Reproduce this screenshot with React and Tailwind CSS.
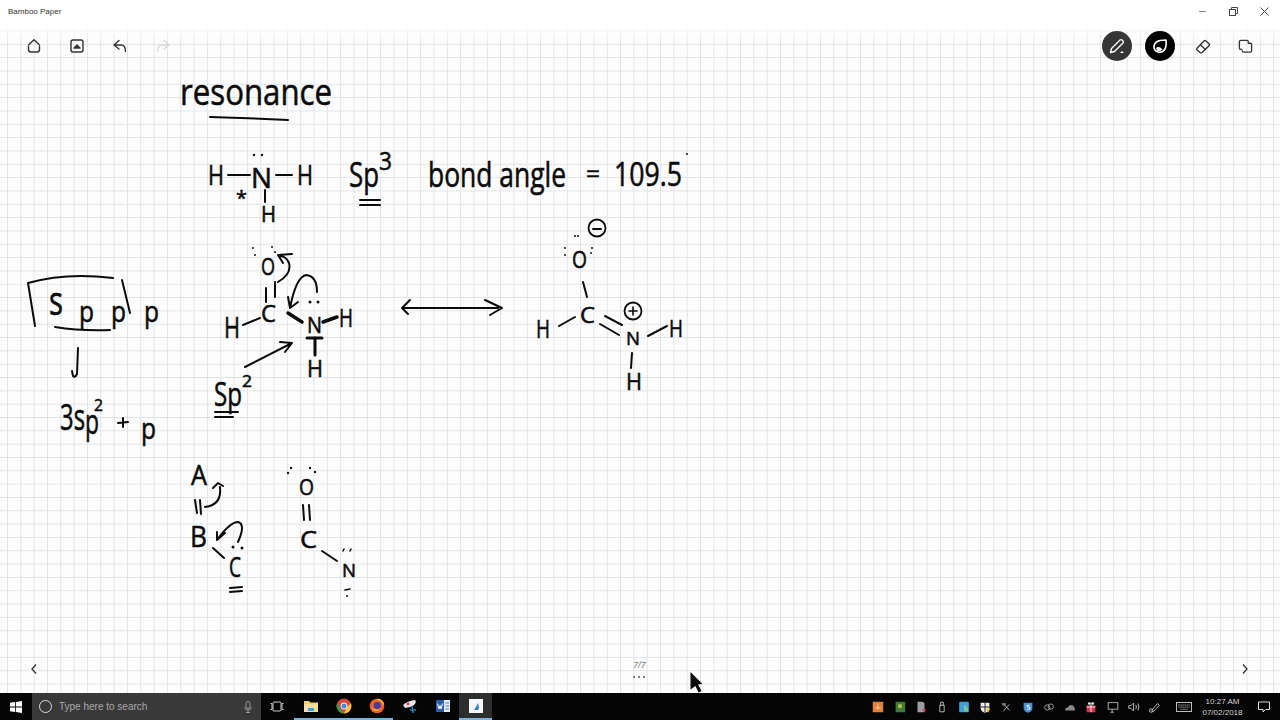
import React from 'react';

// one written glyph group on the page, x = left edge, y = baseline
const T = ({ x, y, s = 28, w, children }) => (
  <text x={x} y={y} fontSize={s} textLength={w} lengthAdjust={w ? 'spacingAndGlyphs' : undefined} stroke="#0b0b0b" strokeWidth={0.55}>
    {children}
  </text>
);

const L = ({ d, t = 2 }) => <path d={d} fill="none" stroke="#0b0b0b" strokeWidth={t} strokeLinecap="round" strokeLinejoin="round" />;

const Dots = ({ pts, r = 1.2 }) => (
  <>
    {pts.map(([cx, cy]) => (
      <circle key={`${cx}-${cy}`} cx={cx} cy={cy} r={r} fill="#111" />
    ))}
  </>
);

const Ink = () => (
  <svg
    className="absolute inset-0 h-full w-full font-['Open_Sans',sans-serif]"
    viewBox="0 23 1280 670"
    fill="#0b0b0b"
  >
    {/* title */}
    <T x={180} y={105} s={37} w={152}>resonance</T>
    <L d="M210 117 Q250 118 288 120" />

    {/* NH3 */}
    <T x={208} y={185} w={16}>H</T>
    <L d="M228 175 L250 175" />
    <T x={251} y={188} w={21}>N</T>
    <L d="M276 175 L292 175" />
    <T x={297} y={185} w={16}>H</T>
    <Dots pts={[[254, 155], [262, 155]]} />
    <T x={236} y={205} s={20}>*</T>
    <L d="M265 190 L265 202" />
    <T x={261} y={222} s={22} w={15}>H</T>

    <T x={349} y={187} s={34} w={30}>Sp</T>
    <T x={379} y={170} s={26} w={13}>3</T>
    <L d="M360 200 L380 200" />
    <L d="M360 205 L380 205" />

    <T x={428} y={187} s={34} w={138}>bond angle</T>
    <T x={586} y={182} s={24} w={14}>=</T>
    <T x={614} y={186} s={32} w={68}>109.5</T>
    <Dots pts={[[687, 154]]} r={1} />

    {/* hybrid orbitals */}
    <L d="M28 283 Q66 272 113 278 M28 283 L35 326 M122 280 L130 313" />
    <T x={49} y={315} s={40} w={14}>s</T>
    <T x={79} y={322} s={30} w={15}>p</T>
    <T x={111} y={322} s={30} w={15}>p</T>
    <T x={144} y={322} s={30} w={15}>p</T>
    <L d="M55 327 Q80 331 110 330" />
    <L d="M78 348 L77 374 Q75 378 73 376 L72 371" />
    <T x={60} y={430} s={36} w={25}>3s</T>
    <T x={85} y={434} s={34} w={14}>p</T>
    <T x={94} y={411} s={16} w={9}>2</T>
    <L d="M123 418 L123 427 M118 423 L128 422" />
    <T x={141} y={439} s={30} w={15}>p</T>

    {/* amide left */}
    <Dots pts={[[253, 248], [255, 255], [272, 247], [275, 252]]} r={1} />
    <T x={261} y={275} s={24} w={14}>O</T>
    <L d="M266 288 L266 302 M275 282 L275 297" />
    <L d="M278 282 Q292 274 289 263 Q286 256 280 256 M292 254 L278 255 L283 263" />
    <T x={224} y={338} s={30} w={16}>H</T>
    <L d="M243 325 L260 318" />
    <T x={261} y={322} s={24} w={15}>C</T>
    <L d="M288 313 L302 322" t={3.5} />
    <T x={307} y={333} s={22} w={15}>N</T>
    <L d="M323 322 L337 317" t={3.5} />
    <T x={339} y={327} s={26} w={14}>H</T>
    <L d="M307 338 L322 338" t={3} />
    <L d="M315 338 L315 355" t={3} />
    <T x={307} y={377} s={24} w={16}>H</T>
    <L d="M317 292 Q317 276 306 275 Q296 277 290 308 M298 302 L290 308 L288 297" />
    <Dots pts={[[310, 302], [318, 302]]} r={1.5} />
    <L d="M245 367 L292 343 M280 342 L292 343 L285 352" />
    <T x={214} y={406} s={32} w={28}>Sp</T>
    <T x={242} y={387} s={17} w={10}>2</T>
    <L d="M215 412 L238 412 M215 417 L233 417" />

    {/* double headed arrow */}
    <L d="M410 300 L402 308 L408 314 M404 308 L498 308 M485 300 L502 308 L490 315" />

    {/* amide right */}
    <circle cx={597} cy={228} r={8.5} fill="none" stroke="#0b0b0b" strokeWidth={1.8} />
    <L d="M593 229 L601 229" />
    <Dots pts={[[575, 236], [578, 236], [565, 248], [565, 255], [592, 248], [591, 253]]} r={1} />
    <T x={572} y={268} s={23} w={15}>O</T>
    <L d="M583 282 L587 297" />
    <T x={536} y={338} s={26} w={14}>H</T>
    <L d="M559 326 L575 317" />
    <T x={580} y={323} s={22} w={15}>C</T>
    <L d="M605 316 L622 325 M600 324 L619 335" />
    <circle cx={633} cy={311} r={8.5} fill="none" stroke="#0b0b0b" strokeWidth={1.8} />
    <L d="M629 311 L637 311 M633 307 L633 315" t={1.6} />
    <T x={626} y={345} s={19} w={14}>N</T>
    <L d="M648 336 L667 326" />
    <T x={669} y={337} s={24} w={14}>H</T>
    <L d="M632 353 L631 368" />
    <T x={626} y={390} s={23} w={16}>H</T>

    {/* lower left */}
    <T x={191} y={485} s={28} w={16}>A</T>
    <L d="M195 500 L197 513 M200 500 L201 514" />
    <L d="M205 507 Q222 505 220 487 M213 488 L218 483 L223 486" />
    <T x={190} y={547} s={30} w={17}>B</T>
    <L d="M238 542 Q246 524 238 522 Q230 522 217 540 M225 533 L217 540 L217 532" />
    <L d="M213 548 L224 558" />
    <Dots pts={[[233, 547], [242, 548]]} r={1.5} />
    <T x={229} y={577} s={27} w={12}>C</T>
    <L d="M230 588 L242 587 M230 592 L242 591" />

    <Dots pts={[[288, 473], [291, 468], [310, 468], [315, 472]]} />
    <T x={299} y={495} s={21} w={15}>O</T>
    <L d="M303 505 L304 520 M309 505 L310 520" />
    <T x={300} y={548} s={24} w={17}>C</T>
    <L d="M322 551 L337 561" />
    <T x={342} y={577} s={19} w={14}>N</T>
    <L d="M343 551 L344 549 M350 551 L351 549" t={1.5} />
    <L d="M345 590 L350 589" t={1.5} />
    <Dots pts={[[347, 596]]} r={1} />
  </svg>
);

const ToolIcon = ({ children, size = 16, box = '0 0 16 16', className = 'text-[#333]' }) => (
  <svg width={size} height={size} viewBox={box} fill="none" stroke="currentColor" strokeWidth="1.4" strokeLinecap="round" strokeLinejoin="round" className={className}>
    {children}
  </svg>
);

const LeftTools = () => (
  <div className="flex items-center">
    <div className="flex w-[43px] justify-center">
      <ToolIcon>
        <path d="M2.5 7 L8 1.8 L13.5 7" />
        <path d="M2.5 8.5 V11.5 Q2.5 14 5 14 H11 Q13.5 14 13.5 11.5 V8.5" />
      </ToolIcon>
    </div>
    <div className="flex w-[43px] justify-center">
      <ToolIcon>
        <rect x="2" y="2" width="12" height="12" rx="2" />
        <path d="M5 10 L8 7 L11 10 Z" fill="currentColor" />
      </ToolIcon>
    </div>
    <div className="flex w-[43px] justify-center">
      <ToolIcon>
        <path d="M7 2.5 L2 7 L7 11 M2 7 H9 Q13.5 7 13.5 13.5" />
      </ToolIcon>
    </div>
    <div className="flex w-[43px] justify-center">
      <ToolIcon className="text-[#d9d9d9]">
        <path d="M9 2.5 L14 7 L9 11 M14 7 H7 Q2.5 7 2.5 13.5" />
      </ToolIcon>
    </div>
  </div>
);

const RightTools = () => (
  <div className="flex items-center">
    <div className="flex w-[43px] justify-center">
      <div className="flex h-[30px] w-[30px] items-center justify-center rounded-full bg-[#363636]">
        <ToolIcon size={20} box="0 0 20 20" className="text-white">
          <path d="M3.5 16.5 L4.5 12.5 L13 4 Q14 3.2 15 4 L16 5 Q16.8 6 16 7 L7.5 15.5 Z" />
          <path d="M15 15 L17 17 L13 17 Z" fill="currentColor" stroke="none" />
        </ToolIcon>
      </div>
    </div>
    <div className="flex w-[43px] justify-center">
      <div className="flex h-[30px] w-[30px] items-center justify-center rounded-full bg-black">
        <ToolIcon size={18} box="0 0 18 18" className="text-white">
          <path d="M15 3 Q15.5 9 14 12 Q11.5 16 7 15 Q2.5 13.5 3 9 Q4 4.5 9 3.5 Z" strokeWidth="1.6" />
          <path d="M5 11 Q8 8.5 11.5 12.5 Q9 15 6.5 14 Z" fill="currentColor" stroke="none" />
        </ToolIcon>
      </div>
    </div>
    <div className="flex w-[43px] justify-center">
      <ToolIcon size={16}>
        <path d="M1.8 10.5 L9 3 Q10 2 11 3 L14 5.7 Q15 6.7 14 7.7 L7 14.5 Q6 15.3 5 14.5 L2 11.8 Q1.2 11 1.8 10.5 Z" />
        <path d="M5.5 7 L10.5 11.5" />
      </ToolIcon>
    </div>
    <div className="flex w-[43px] justify-center">
      <ToolIcon size={15}>
        <path d="M4 11 H3 Q1.5 11 1.5 9.5 V3 Q1.5 1.5 3 1.5 H9.5 Q11 1.5 11 3 V4" />
        <path d="M11 4.5 H13 Q14.5 4.5 14.5 6 V12.5 Q14.5 14 13 14 H6 Q4.5 14 4.5 12.5" />
      </ToolIcon>
    </div>
  </div>
);

const TaskGlyph = ({ children }) => (
  <svg width="16" height="16" viewBox="0 0 16 16" fill="none">
    {children}
  </svg>
);

const apps = [
  {
    id: 'explorer',
    on: true,
    icon: (
      <TaskGlyph>
        <path d="M1 3 H6 L7.5 4.5 H15 V14 H1 Z" fill="#f4cf63" />
        <rect x="1" y="6" width="14" height="8" fill="#fbe08f" />
        <rect x="5" y="10" width="6" height="3" fill="#3ba6d6" />
      </TaskGlyph>
    ),
  },
  {
    id: 'chrome',
    on: true,
    icon: (
      <TaskGlyph>
        <circle cx="8" cy="8" r="7.5" fill="#d9473a" />
        <path d="M1.2 5 L4.8 11.5 L8 15.5 A7.5 7.5 0 0 1 1.2 5 Z" fill="#2f9e4f" />
        <path d="M8 15.5 L11 9 L14.8 5.2 A7.5 7.5 0 0 1 8 15.5 Z" fill="#f6c53e" />
        <circle cx="8" cy="8" r="3.4" fill="#eee" />
        <circle cx="8" cy="8" r="2.5" fill="#4a88e0" />
      </TaskGlyph>
    ),
  },
  {
    id: 'firefox',
    on: true,
    icon: (
      <TaskGlyph>
        <circle cx="8" cy="8" r="7.3" fill="#e8622a" />
        <path d="M8 2 A6 6 0 0 1 14 8 L15 5 A7.5 7.5 0 0 0 8 .7 Z" fill="#f7b733" />
        <circle cx="8.3" cy="7.6" r="3.6" fill="#4a3a9e" />
        <path d="M3 9 Q6 13 12 10 Q9 15 4 12 Z" fill="#f7a33a" />
      </TaskGlyph>
    ),
  },
  {
    id: 'snip',
    on: false,
    icon: (
      <TaskGlyph>
        <path d="M1 7 Q5 3 13 2 Q15 4 12 7 Q8 10 3 10 Z" fill="#e6e6e6" />
        <circle cx="6" cy="6" r="1.4" fill="#d0454c" />
        <path d="M10 8 L11 15 M8 12 H14" stroke="#2f7fb8" strokeWidth="1.6" />
      </TaskGlyph>
    ),
  },
  {
    id: 'word',
    on: false,
    icon: (
      <TaskGlyph>
        <rect x="1" y="2" width="14" height="12" fill="#e8eef7" />
        <rect x="1" y="2" width="8" height="12" fill="#2b5ea8" />
        <path d="M2.5 5.5 L4 11 L5 7.5 L6 11 L7.5 5.5" stroke="#fff" strokeWidth="1" />
        <path d="M10.5 5 H14 M10.5 8 H14 M10.5 11 H14" stroke="#4a76b8" strokeWidth="1" />
      </TaskGlyph>
    ),
  },
  {
    id: 'bamboo',
    on: true,
    active: true,
    icon: (
      <TaskGlyph>
        <rect x="1" y="1" width="14" height="14" fill="#f5f7fa" />
        <path d="M8 9 L10 5 L11 10 L10 12 H6 Z" fill="#2f7fd0" />
      </TaskGlyph>
    ),
  },
];

const trayIcons = [
  <><rect x="2" y="2" width="12" height="12" fill="#e0803a" /><path d="M5 9 H11 M8 5 V11" stroke="#f6d5b0" /></>,
  <><rect x="3" y="2" width="11" height="12" fill="#3f7a3a" /><rect x="6" y="5" width="4" height="4" fill="#b9c94a" /></>,
  <><path d="M4 2 H10 L12 4 V14 H4 Z" fill="#9a9ea3" /><circle cx="11.5" cy="11.5" r="1.8" fill="#d8434f" /></>,
  <><path d="M5.5 6 H10.5 V13.5 H5.5 Z M6.5 6 V2.5 H9.5 V6" stroke="#c9c9c9" /></>,
  <><rect x="2.5" y="2" width="11" height="12" rx="1" fill="#3fa0d8" /><path d="M8 6 Q12 6 13 13 H8 Z" fill="#7cc4a0" /></>,
  <><path d="M3 3 H13 V9 Q13 13 8 14.5 Q3 13 3 9 Z" fill="#eee" /><path d="M8 3 V14 M3 8 H13" stroke="#111" /><path d="M9 10 L14 10 L11.5 14.5 Z" fill="#f2c230" /></>,
  <><path d="M3 4 Q8 6 12 12 M5 13 Q7 9 12 5" stroke="#bbb" /><circle cx="6" cy="5" r="2" fill="#777" /></>,
  <><path d="M3 3 H13 V9 Q13 13 8 14.5 Q3 13 3 9 Z" fill="#4a90d0" /><path d="M10 6 H7 V8 H10 V10.5 H6.5" stroke="#fff" /></>,
  <><circle cx="6" cy="8.5" r="3" stroke="#aaa" /><circle cx="10" cy="7.5" r="3" stroke="#aaa" /></>,
  <><path d="M2.5 12 Q2 8.5 5.5 8.5 Q7 4.5 10.5 6 Q14 7.5 13.5 12 Z" fill="#8a8a8a" /></>,
  <><rect x="3" y="6" width="10" height="8" fill="#d0344a" /><path d="M8 3 V14 M3 8 H13" stroke="#fff" /><circle cx="6" cy="4" r="1.5" fill="#e8e8e8" /><circle cx="10" cy="4" r="1.5" fill="#e8e8e8" /></>,
  <><rect x="2.5" y="3" width="11" height="7.5" stroke="#bbb" /><path d="M7 10.5 V14 M5 14 H9" stroke="#bbb" /></>,
  <><path d="M2 6.5 H4.5 L7.5 3.5 V12.5 L4.5 9.5 H2 Z" stroke="#ccc" /><path d="M10 5.5 Q11.5 8 10 10.5 M12.5 4 Q14.5 8 12.5 12" stroke="#ccc" /></>,
  <><path d="M4 12 L11 4 L13 6 L6 13.5 Z" stroke="#ccc" /><circle cx="3.5" cy="12" r="2" stroke="#ccc" /></>,
];

const Taskbar = () => (
  <div className="flex h-[27px] shrink-0 items-stretch bg-[#050505] font-['Liberation_Sans',sans-serif]">
    <div className="flex w-8 items-center justify-center">
      <svg width="12" height="12" viewBox="0 0 12 12" fill="#fff">
        <path d="M0 1.8 L5 1 V5.6 H0 Z M5.8 .9 L12 0 V5.6 H5.8 Z M0 6.4 H5 V11 L0 10.2 Z M5.8 6.4 H12 V12 L5.8 11.1 Z" />
      </svg>
    </div>
    <div className="flex w-[229px] items-center bg-[#393939] pr-[9px]">
      <span className="ml-[7px] h-[13px] w-[13px] rounded-full border-[1.5px] border-[#ddd]" />
      <span className="ml-[7px] flex-1 text-[10px] text-[#a9a9a9]">Type here to search</span>
      <svg width="8" height="12" viewBox="0 0 8 12" fill="none" stroke="#999" strokeWidth="1">
        <rect x="2" y=".5" width="4" height="7" rx="2" />
        <path d="M.7 6 Q1 9 4 9 Q7 9 7.3 6 M4 9 V11.5 M2 11.5 H6" />
      </svg>
    </div>
    <div className="flex w-8 items-center justify-center">
      <svg width="14" height="11" viewBox="0 0 14 11" fill="none" stroke="#ccc" strokeWidth="1">
        <rect x="3" y="1" width="8" height="9" rx="1" />
        <path d="M.5 2.5 H2 V8.5 H.5 M13.5 2.5 H12 V8.5 H13.5" />
      </svg>
    </div>
    <div className="ml-[1px] flex">
      {apps.map((a) => (
        <div
          key={a.id}
          className={`flex w-[33px] items-center justify-center border-b-2 ${a.active ? 'bg-[#2d2d2d]' : ''} ${a.on ? 'border-[#7ab3dd]' : 'border-transparent'}`}
        >
          {a.icon}
        </div>
      ))}
    </div>
    <div className="flex-1" />
    <div className="flex items-center pr-[5px]">
      {trayIcons.map((icon, i) => (
        <div key={i} className="flex w-[21.3px] items-center justify-center">
          <svg width="14" height="14" viewBox="0 0 16 16" fill="none">
            {icon}
          </svg>
        </div>
      ))}
    </div>
    <div className="flex w-[26px] items-center justify-center">
      <svg width="16" height="10" viewBox="0 0 16 10" fill="none" stroke="#bbb" strokeWidth="1">
        <rect x=".5" y=".5" width="15" height="9" />
        <path d="M2.5 3 H13.5 M2.5 5 H13.5 M4.5 7.2 H11.5" strokeDasharray="1.2 .8" />
      </svg>
    </div>
    <div className="flex w-[51px] flex-col items-center justify-center text-[8px] leading-[11px] text-[#d6d6d6]">
      <span>10:27 AM</span>
      <span>07/02/2018</span>
    </div>
    <div className="flex w-8 items-center justify-center">
      <svg width="12" height="12" viewBox="0 0 12 12" fill="none" stroke="#ddd" strokeWidth="1">
        <path d="M.5 1 H11.5 V8.5 H7.5 L5 11 V8.5 H.5 Z" />
      </svg>
    </div>
  </div>
);

const App = () => (
  <div className="flex h-screen w-[1280px] flex-col overflow-hidden bg-white font-['Liberation_Sans',sans-serif]">
    {/* title bar */}
    <div className="flex h-[23px] shrink-0 items-center justify-between bg-white">
      <span className="pl-2 text-[8px] text-[#333]">Bamboo Paper</span>
      <div className="flex items-center">
        <div className="flex w-[31px] justify-center">
          <span className="h-px w-[7px] bg-[#888]" />
        </div>
        <div className="flex w-[31px] justify-center">
          <svg width="9" height="9" viewBox="0 0 9 9" fill="none" stroke="#444">
            <rect x=".5" y="2.5" width="6" height="6" />
            <path d="M2.5 2.5 V.5 H8.5 V6.5 H6.5" />
          </svg>
        </div>
        <div className="flex w-[31px] justify-center">
          <svg width="9" height="9" viewBox="0 0 9 9" stroke="#444">
            <path d="M.5 .5 L8.5 8.5 M8.5 .5 L.5 8.5" />
          </svg>
        </div>
      </div>
    </div>

    {/* paper */}
    <div className="relative flex min-h-0 flex-1 flex-col justify-between bg-[#fdfdfd] bg-[linear-gradient(to_right,#e1e4e7_1px,transparent_1px),linear-gradient(to_bottom,#e1e4e7_1px,transparent_1px)] bg-[size:13.33px_13.33px] bg-[position:7px_7.5px]">
      <div className="absolute inset-x-0 top-0 h-5 bg-gradient-to-b from-white to-transparent" />
      <Ink />
      <div className="relative flex items-center justify-between pl-3 pr-[13px] pt-2">
        <LeftTools />
        <RightTools />
      </div>
      <div className="relative flex items-center justify-between pb-[15px] pl-[31px] pr-[32px]">
        <svg width="6" height="10" viewBox="0 0 6 10" fill="none" stroke="#333" strokeWidth="1.3">
          <path d="M5 .5 L1 5 L5 9.5" />
        </svg>
        <div className="flex flex-col items-center text-[#777]">
          <span className="text-[9px] italic leading-[10px]">7/7</span>
          <span className="mt-[6px] flex gap-[3px]">
            <span className="h-[2px] w-[2px] rounded-full bg-[#555]" />
            <span className="h-[2px] w-[2px] rounded-full bg-[#555]" />
            <span className="h-[2px] w-[2px] rounded-full bg-[#555]" />
          </span>
        </div>
        <svg width="6" height="10" viewBox="0 0 6 10" fill="none" stroke="#333" strokeWidth="1.3">
          <path d="M1 .5 L5 5 L1 9.5" />
        </svg>
      </div>
      {/* mouse pointer */}
      <svg className="absolute left-[690px] top-[649px]" width="13" height="21" viewBox="0 0 13 21" fill="#0a0a0a">
        <path d="M.5 0 L12.5 12 L8 12.5 L11.5 19 L8.5 20.5 L5.5 14 L.5 17.5 Z" />
      </svg>
    </div>

    <Taskbar />
  </div>
);

export default App;
